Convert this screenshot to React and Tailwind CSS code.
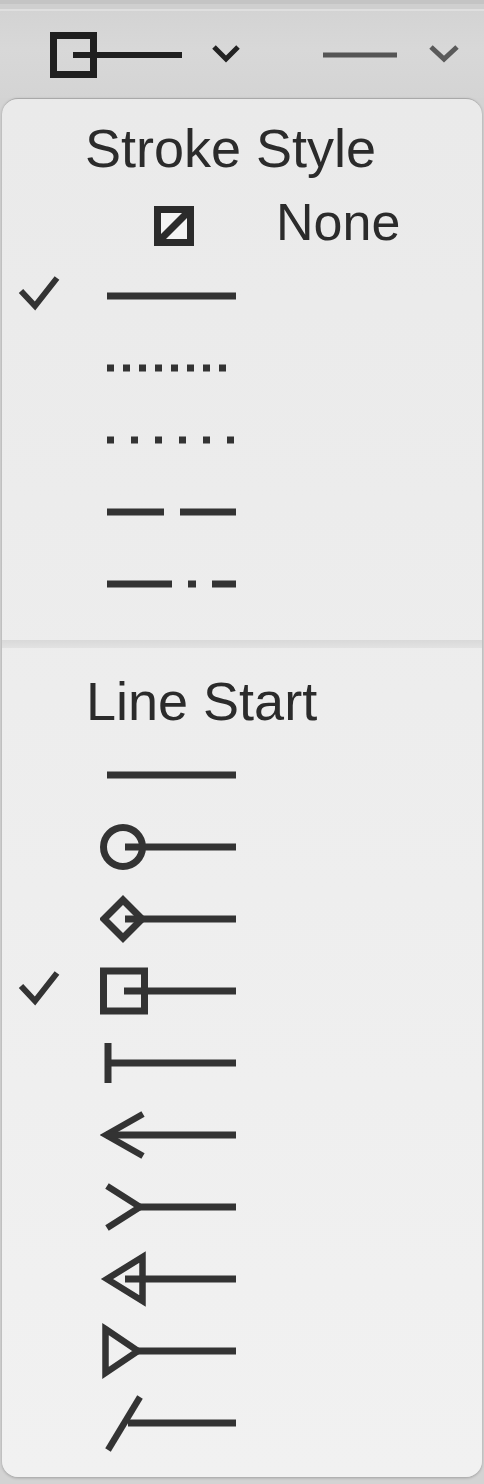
import React from "react";

const INK = "#333333";

const Check = () => (
  <svg width="98" height="72" viewBox="0 0 98 72" className="shrink-0">
    <polyline points="19,31 33,46 55,18" fill="none" stroke={INK} strokeWidth="6" strokeLinejoin="miter" />
  </svg>
);

// stroke style previews
const strokeStyles = [
  {
    checked: true,
    draw: <rect x="7" y="32.5" width="129" height="7" fill={INK} />,
  },
  {
    draw: [0, 1, 2, 3, 4, 5, 6, 7].map((i) => (
      <rect key={i} x={7 + i * 16} y="32.5" width="7" height="7" fill={INK} />
    )),
  },
  {
    draw: [0, 1, 2, 3, 4, 5].map((i) => (
      <rect key={i} x={7 + i * 24} y="32.5" width="7" height="7" fill={INK} />
    )),
  },
  {
    draw: (
      <>
        <rect x="7" y="32.5" width="57" height="7" fill={INK} />
        <rect x="80" y="32.5" width="56" height="7" fill={INK} />
      </>
    ),
  },
  {
    draw: (
      <>
        <rect x="7" y="32.5" width="65" height="7" fill={INK} />
        <rect x="88" y="32.5" width="8" height="7" fill={INK} />
        <rect x="112" y="32.5" width="24" height="7" fill={INK} />
      </>
    ),
  },
];

const S = { fill: "none", stroke: INK, strokeWidth: 7 };

// line start previews
const lineStarts = [
  { draw: <line x1="7" y1="36" x2="136" y2="36" {...S} /> },
  {
    draw: (
      <>
        <circle cx="23" cy="36" r="19.5" {...S} />
        <line x1="25" y1="36" x2="136" y2="36" {...S} />
      </>
    ),
  },
  {
    draw: (
      <>
        <polygon points="4,36 23,17 42,36 23,55" {...S} />
        <line x1="25" y1="36" x2="136" y2="36" {...S} />
      </>
    ),
  },
  {
    checked: true,
    draw: (
      <>
        <rect x="3.5" y="16" width="41" height="40" {...S} />
        <line x1="24" y1="36" x2="136" y2="36" {...S} />
      </>
    ),
  },
  {
    draw: (
      <>
        <line x1="8" y1="16" x2="8" y2="56" {...S} />
        <line x1="5" y1="36" x2="136" y2="36" {...S} />
      </>
    ),
  },
  {
    draw: (
      <>
        <polyline points="43,15 6,36 43,57" {...S} strokeLinejoin="miter" strokeWidth="6.5" />
        <line x1="6" y1="36" x2="136" y2="36" {...S} />
      </>
    ),
  },
  {
    draw: (
      <>
        <polyline points="7,15 40,36 7,57" {...S} strokeWidth="6.5" />
        <line x1="38" y1="36" x2="136" y2="36" {...S} />
      </>
    ),
  },
  {
    draw: (
      <>
        <polygon points="7,36 42.5,14 42.5,58" {...S} strokeWidth="6.5" />
        <line x1="25" y1="36" x2="136" y2="36" {...S} />
      </>
    ),
  },
  {
    draw: (
      <>
        <polygon points="5.5,14 38,36 5.5,58" {...S} strokeWidth="6.5" />
        <line x1="38" y1="36" x2="136" y2="36" {...S} />
      </>
    ),
  },
  {
    draw: (
      <>
        <line x1="8" y1="63" x2="40" y2="10" {...S} strokeWidth="6.5" />
        <line x1="28" y1="36" x2="136" y2="36" {...S} />
      </>
    ),
  },
];

const Row = ({ checked, children }) => (
  <div className="flex h-[72px] items-center">
    {checked ? <Check /> : <div className="w-[98px] shrink-0" />}
    <svg width="140" height="72" viewBox="0 0 140 72" className="shrink-0">
      {children}
    </svg>
  </div>
);

export default function App() {
  return (
    <div className="w-[484px] h-[1484px] overflow-hidden bg-[#d3d3d3] font-['Liberation_Sans',Arial,sans-serif] text-[#2b2b2b]">
      {/* Toolbar */}
      <div className="h-[98px] bg-gradient-to-b from-[#d2d2d2] via-[#d8d8d8] to-[#d4d4d4]">
        <div className="h-[4px] bg-[#c4c4c4]" />
        <div className="h-[5px] bg-[#cfcfcf]" />
        <div className="h-[2px] bg-[#dfdfdf]" />
        <div className="flex h-[87px] items-start">
          <svg width="140" height="87" viewBox="0 0 140 87" className="ml-[48px] shrink-0">
            <rect x="5.5" y="24.5" width="40" height="39" fill="none" stroke="#1f1f1f" strokeWidth="7" />
            <line x1="25" y1="44" x2="134" y2="44" stroke="#1f1f1f" strokeWidth="6" />
          </svg>
          <svg width="32" height="87" viewBox="0 0 32 87" className="ml-[22px] shrink-0">
            <polyline points="4,36 16,48 28,36" fill="none" stroke="#222" strokeWidth="5" />
          </svg>
          <svg width="80" height="87" viewBox="0 0 80 87" className="ml-[78px] shrink-0">
            <line x1="3" y1="44" x2="77" y2="44" stroke="#555" strokeWidth="5" />
          </svg>
          <svg width="34" height="87" viewBox="0 0 34 87" className="ml-[28px] shrink-0">
            <polyline points="3,36 16,48 29,36" fill="none" stroke="#5a5a5a" strokeWidth="5" />
          </svg>
        </div>
      </div>

      {/* Popover */}
      <div className="ml-[2px] w-[480px] rounded-[16px] border-t border-[#a9a9a9] bg-gradient-to-b from-[#eaeaea] to-[#f1f1f1] pt-[13px] pb-[18px] shadow-[0_1px_3px_rgba(0,0,0,0.25)]">
        <div className="h-[76px] pl-[83px] text-[54px] leading-[72px]">Stroke Style</div>

        <div className="flex h-[72px] items-center">
          <svg width="44" height="44" viewBox="0 0 44 44" className="ml-[148px] shrink-0">
            <rect x="4" y="4" width="40" height="40" fill="#2b2b2b" />
            <rect x="11" y="11" width="26" height="26" fill="#f4f4f4" />
            <line x1="11" y1="37" x2="37" y2="11" stroke="#2b2b2b" strokeWidth="7" />
          </svg>
          <span className="ml-[82px] -mt-[4px] text-[52px] leading-[72px]">None</span>
        </div>

        {strokeStyles.map((s, i) => (
          <Row key={i} checked={s.checked}>
            {s.draw}
          </Row>
        ))}

        <div className="mt-[20px] h-[8px] bg-gradient-to-b from-[#d9d9d9] to-[#e2e2e2]" />

        <div className="mt-[17px] h-[74px] pl-[84px] text-[54px] leading-[72px]">Line Start</div>

        {lineStarts.map((s, i) => (
          <Row key={i} checked={s.checked}>
            {s.draw}
          </Row>
        ))}
      </div>
    </div>
  );
}
